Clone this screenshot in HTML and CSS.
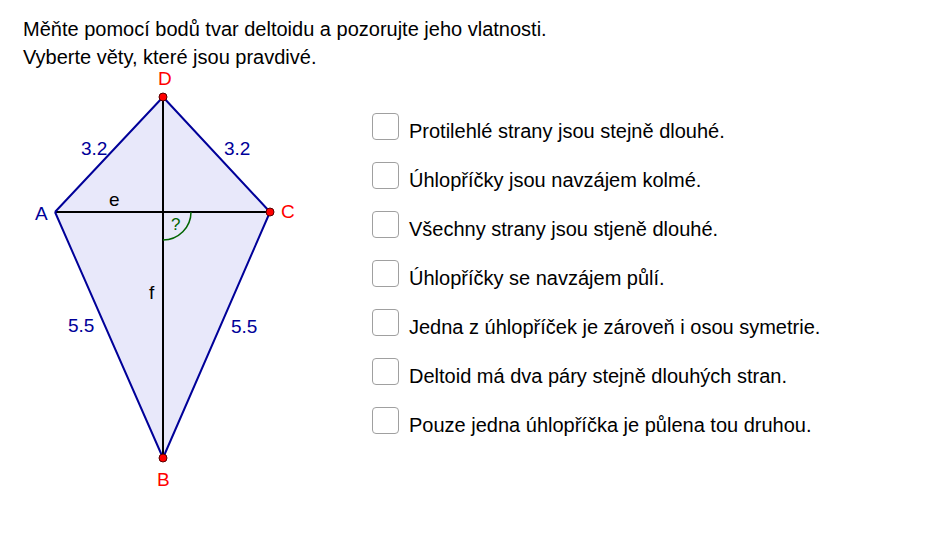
FILE: index.html
```html
<!DOCTYPE html>
<html lang="cs">
<head>
  <meta charset="UTF-8">
  <title>Deltoid</title>
  <link rel="stylesheet" href="styles.css">
</head>
<body>
  <div class="applet">
    <!-- Zadání -->
    <div class="intro">
      <p>Měňte pomocí bodů tvar deltoidu a pozorujte jeho vlatnosti.</p>
      <p>Vyberte věty, které jsou pravdivé.</p>
    </div>

    <div class="stage">
      <!-- Deltoid ABCD -->
      <svg class="kite" width="340" height="450" viewBox="0 61 340 450">
        <polygon class="kite-fill" points="55,212 163,97 270,212 163,458"/>
        <line class="diag" x1="55" y1="212" x2="270" y2="212"/>
        <line class="diag" x1="163" y1="97" x2="163" y2="458"/>
        <path class="angle" d="M 191 212 A 28 28 0 0 1 163 240"/>
        <text class="angle-q" x="171" y="230">?</text>
        <polyline class="side" points="55,212 163,97 270,212 163,458 55,212"/>

        <circle class="pt" cx="163" cy="97" r="4"/>
        <circle class="pt" cx="270" cy="212" r="4"/>
        <circle class="pt" cx="163" cy="458" r="4"/>

        <text class="lbl red" x="158" y="85">D</text>
        <text class="lbl blue" x="35" y="220">A</text>
        <text class="lbl red" x="281" y="218">C</text>
        <text class="lbl red" x="157" y="486">B</text>

        <text class="lbl blue" x="81" y="155">3.2</text>
        <text class="lbl blue" x="224" y="155">3.2</text>
        <text class="lbl blue" x="68" y="332">5.5</text>
        <text class="lbl blue" x="231" y="333">5.5</text>
        <text class="lbl" x="109" y="206">e</text>
        <text class="lbl" x="149" y="299">f</text>
      </svg>

      <!-- Tvrzení -->
      <ul class="claims">
        <li><span class="box"></span><span class="txt">Protilehlé strany jsou stejně dlouhé.</span></li>
        <li><span class="box"></span><span class="txt">Úhlopříčky jsou navzájem kolmé.</span></li>
        <li><span class="box"></span><span class="txt">Všechny strany jsou stjeně dlouhé.</span></li>
        <li><span class="box"></span><span class="txt">Úhlopříčky se navzájem půlí.</span></li>
        <li><span class="box"></span><span class="txt">Jedna z úhlopříček je zároveň i osou symetrie.</span></li>
        <li><span class="box"></span><span class="txt">Deltoid má dva páry stejně dlouhých stran.</span></li>
        <li><span class="box"></span><span class="txt">Pouze jedna úhlopříčka je půlena tou druhou.</span></li>
      </ul>
    </div>
  </div>
</body>
</html>
```

FILE: styles.css
```css
/* Obecné */
body {
  margin: 0;
  background: #fff;
  font-family: 'Liberation Sans', Arial, sans-serif;
  color: #000;
}

.applet {
  width: 950px;
  height: 550px;
  overflow: hidden;
}

.intro {
  padding: 15px 0 0 23px;
  font-size: 20px;
  line-height: 28px;
}

.intro p {
  margin: 0;
}

/* Plátno s deltoidem */
.stage {
  display: flex;
  align-items: flex-start;
  margin-top: -10px;
}

.kite {
  display: block;
  flex: none;
  overflow: visible;
}

.kite-fill {
  fill: #e8e8fa;
  stroke: none;
}

.side {
  fill: none;
  stroke: #000099;
  stroke-width: 2;
  stroke-linejoin: round;
}

.diag {
  stroke: #000;
  stroke-width: 2;
}

.angle {
  fill: none;
  stroke: #006400;
  stroke-width: 1.5;
}

.angle-q {
  fill: #006400;
  font-size: 17px;
}

.pt {
  fill: #ff0000;
  stroke: #550000;
  stroke-width: 1;
}

.lbl {
  font-size: 19px;
  fill: #000;
}

.lbl.red {
  fill: #ff0000;
}

.lbl.blue {
  fill: #000099;
}

/* Zaškrtávací políčka */
.claims {
  list-style: none;
  margin: 52px 0 0 32px;
  padding: 0;
}

.claims li {
  display: flex;
  align-items: flex-start;
  height: 49px;
  font-size: 20px;
  line-height: 24px;
}

.box {
  width: 25px;
  height: 25px;
  border: 1px solid #a0a0a0;
  border-radius: 4px;
  background: #fff;
  margin-right: 10px;
  flex: none;
}

.txt {
  padding-top: 6px;
}
```
